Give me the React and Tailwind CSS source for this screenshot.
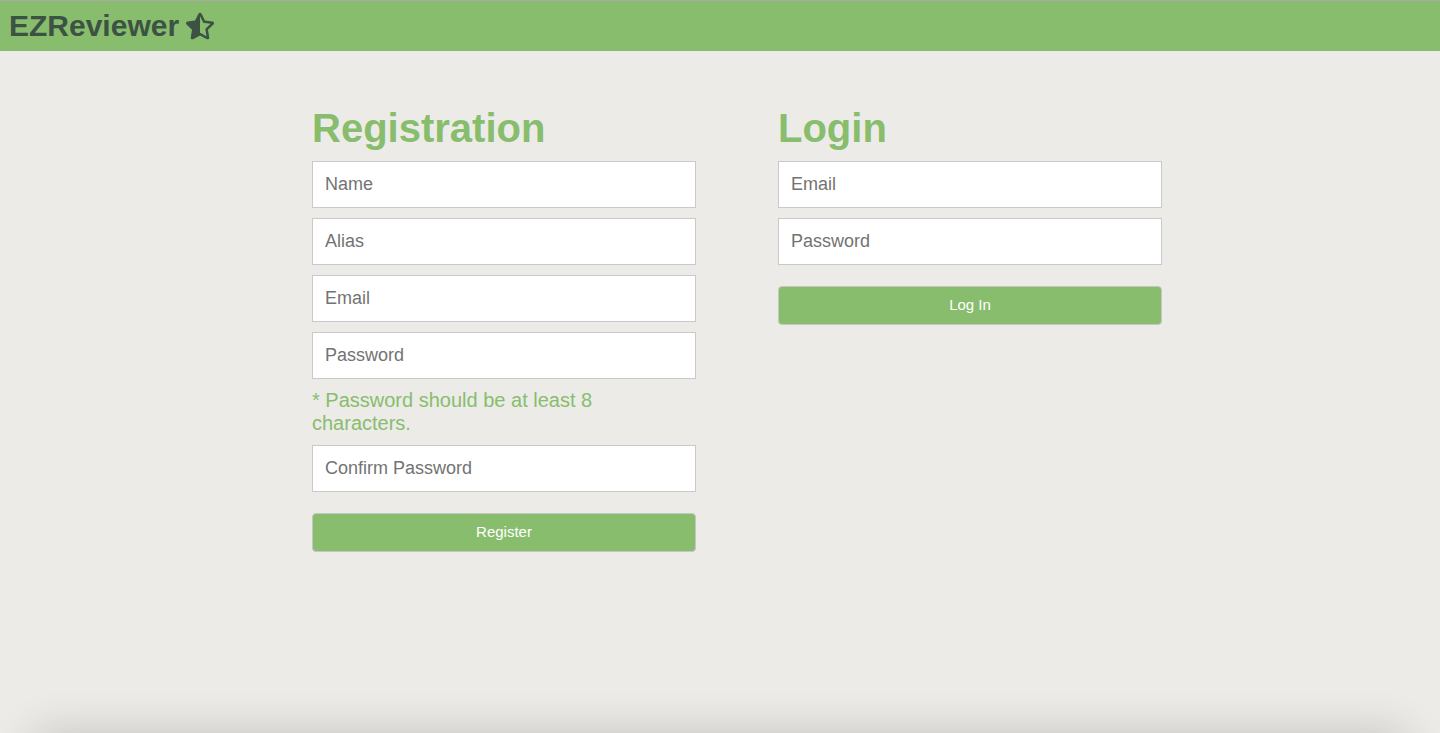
import React from 'react';
import { FaStarHalfAlt } from 'react-icons/fa';

const font = { fontFamily: '"Liberation Sans", Arial, sans-serif' };

function Field({ placeholder, type = 'text', className = '' }) {
  return (
    <input
      type={type}
      placeholder={placeholder}
      className={`block w-full h-[47px] border border-[#c9c9c9] bg-white px-3 text-[18px] text-[#333] placeholder:text-[#737373] outline-none ${className}`}
    />
  );
}

function SubmitButton({ children }) {
  return (
    <button className="block w-full h-[39px] mt-[21px] rounded-[4px] border border-[#c4c8c0] bg-[#88bd6e] text-[15px] text-white">
      {children}
    </button>
  );
}

export default function App() {
  return (
    <div className="min-h-screen bg-[#ecebe8]" style={font}>
      <header className="h-[51px] border-t border-[#aaaaaa] bg-[#88bd6e] flex items-center pl-[9px]">
        <h1 className="text-[30px] font-bold leading-none text-[#3c5243]">EZReviewer</h1>
        <FaStarHalfAlt className="ml-[7px] text-[28px] text-[#3c5243]" />
      </header>

      <main className="h-[682px] pt-[54px] pl-[312px] flex gap-[82px]">
        <section className="w-[384px]">
          <h2 className="text-[40px] font-bold leading-[46px] text-[#88bd6e] mb-[10px]">Registration</h2>
          <Field placeholder="Name" />
          <Field placeholder="Alias" className="mt-[10px]" />
          <Field placeholder="Email" type="email" className="mt-[10px]" />
          <Field placeholder="Password" type="password" className="mt-[10px]" />
          <p className="w-[300px] mt-[10px] text-[20px] leading-[23px] text-[#88bd6e]">
            * Password should be at least 8 characters.
          </p>
          <Field placeholder="Confirm Password" type="password" className="mt-[10px]" />
          <SubmitButton>Register</SubmitButton>
        </section>

        <section className="w-[384px]">
          <h2 className="text-[40px] font-bold leading-[46px] text-[#88bd6e] mb-[10px]">Login</h2>
          <Field placeholder="Email" type="email" />
          <Field placeholder="Password" type="password" className="mt-[10px]" />
          <SubmitButton>Log In</SubmitButton>
        </section>
      </main>

      <footer className="mx-[30px] h-[40px] rounded-[24px] bg-[#ecebe8] shadow-[0_0_44px_rgba(0,0,0,0.18)]" />
    </div>
  );
}
